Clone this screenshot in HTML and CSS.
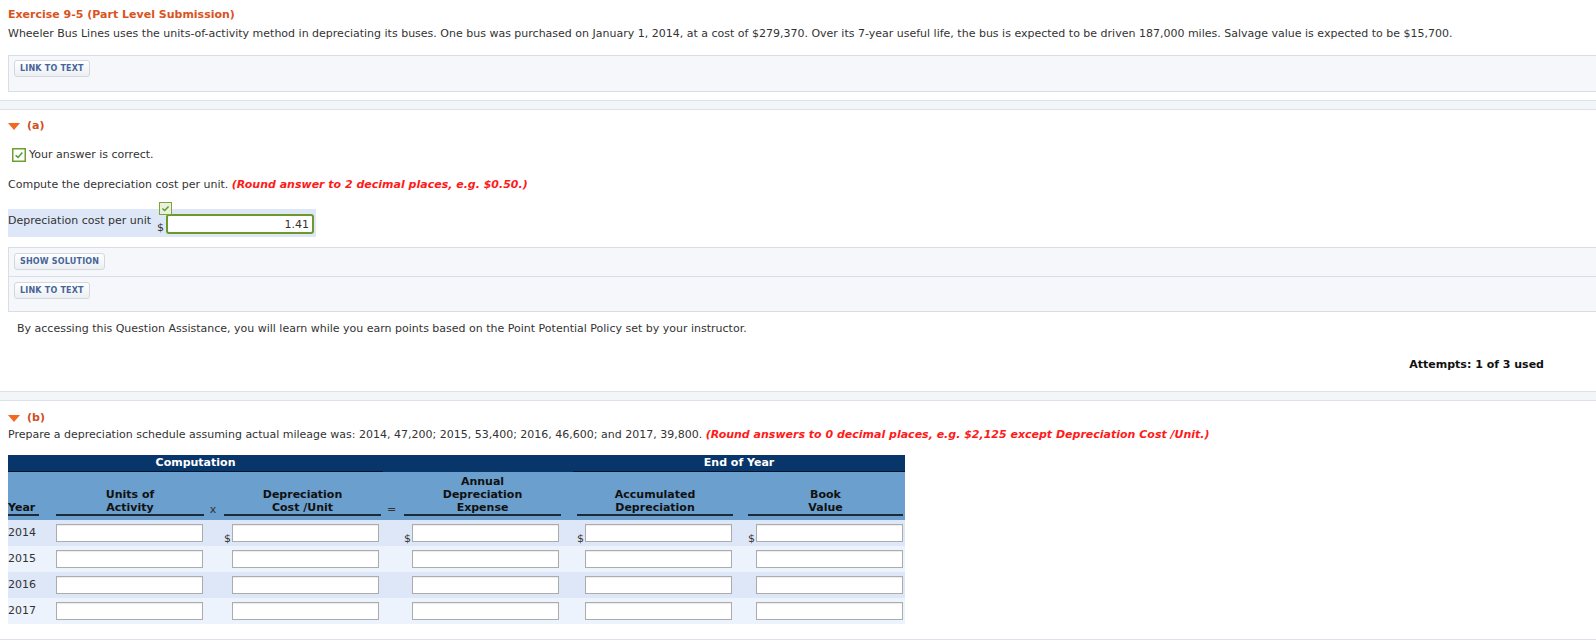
FILE: index.html
```html
<!DOCTYPE html>
<html lang="en">
<head>
    <meta charset="UTF-8">
    <meta name="viewport" content="width=device-width, initial-scale=1.0">
    <title>Exercise 9-5</title>
    <link rel="stylesheet" href="styles.css">
</head>
<body>
    <div class="question">
        <h1 class="ex-title">Exercise 9-5 (Part Level Submission)</h1>
        <p class="intro">Wheeler Bus Lines uses the units-of-activity method in depreciating its buses. One bus was purchased on January 1, 2014, at a cost of $279,370. Over its 7-year useful life, the bus is expected to be driven 187,000 miles. Salvage value is expected to be $15,700.</p>
        <div class="assist-panel first">
            <div class="assist-row"><button class="assist-btn">Link to Text</button></div>
        </div>
    </div>

    <div class="part-sep"></div>

    <div class="part">
        <div class="part-head"><span class="caret"></span>(a)</div>
        <div class="correct">
            <svg class="check-icon" width="14" height="14" viewBox="0 0 14 14">
                <rect x="0.75" y="0.75" width="12.5" height="12.5" fill="#fff" stroke="#6e9f31" stroke-width="1.5"/>
                <path d="M3.6 7.2 L6 9.4 L10.4 4.6" fill="none" stroke="#4f9a2a" stroke-width="1.5"/>
            </svg>
            Your answer is correct.
        </div>
        <p class="prompt">Compute the depreciation cost per unit. <em class="hint">(Round answer to 2 decimal places, e.g. $0.50.)</em></p>
        <div class="answer-row">
            <span class="answer-label">Depreciation cost per unit</span>
            <span class="answer-field">
                <svg class="mini-check" width="13" height="13" viewBox="0 0 13 13">
                    <rect x="0.5" y="0.5" width="12" height="12" fill="#e9f1dc" stroke="#7ba33e"/>
                    <path d="M3.4 6.6 L5.6 8.6 L9.6 4.4" fill="none" stroke="#5c9a2a" stroke-width="1.4"/>
                </svg>
                <span class="cur">$</span>
                <input class="answer-input" type="text" value="1.41">
            </span>
        </div>
        <div class="assist-panel">
            <div class="assist-row"><button class="assist-btn">Show Solution</button></div>
            <div class="assist-row last"><button class="assist-btn">Link to Text</button></div>
        </div>
        <p class="assist-note">By accessing this Question Assistance, you will learn while you earn points based on the Point Potential Policy set by your instructor.</p>
        <div class="attempts">Attempts: 1 of 3 used</div>
    </div>

    <div class="part-sep wide"></div>

    <div class="part">
        <div class="part-head b"><span class="caret"></span>(b)</div>
        <p class="prompt tight">Prepare a depreciation schedule assuming actual mileage was: 2014, 47,200; 2015, 53,400; 2016, 46,600; and 2017, 39,800. <em class="hint">(Round answers to 0 decimal places, e.g. $2,125 except Depreciation Cost /Unit.)</em></p>

        <table class="schedule">
            <colgroup>
                <col style="width: 44px">
                <col style="width: 154px">
                <col style="width: 14px">
                <col style="width: 163px">
                <col style="width: 17px">
                <col style="width: 163px">
                <col style="width: 10px">
                <col style="width: 162px">
                <col style="width: 9px">
                <col style="width: 161px">
            </colgroup>
            <tr class="group-row">
                <td colspan="4"><div class="group-label">Computation</div></td>
                <td colspan="3"></td>
                <td colspan="3"><div class="group-label">End of Year</div></td>
            </tr>
            <tr class="head-row">
                <th class="year-head"><div class="col-label">Year</div></th>
                <th><div class="col-label">Units of<br>Activity</div></th>
                <th class="op">x</th>
                <th><div class="col-label">Depreciation<br>Cost /Unit</div></th>
                <th class="op">=</th>
                <th><div class="col-label">Annual<br>Depreciation<br>Expense</div></th>
                <th></th>
                <th><div class="col-label">Accumulated<br>Depreciation</div></th>
                <th></th>
                <th><div class="col-label">Book<br>Value</div></th>
            </tr>
            <tr>
                <td class="year">2014</td>
                <td><div class="cell"><input type="text"></div></td>
                <td></td>
                <td><div class="cell"><span class="cur">$</span><input type="text"></div></td>
                <td></td>
                <td><div class="cell"><span class="cur">$</span><input type="text"></div></td>
                <td></td>
                <td><div class="cell"><span class="cur">$</span><input type="text"></div></td>
                <td></td>
                <td><div class="cell"><span class="cur">$</span><input type="text"></div></td>
            </tr>
            <tr>
                <td class="year">2015</td>
                <td><div class="cell"><input type="text"></div></td>
                <td></td>
                <td><div class="cell"><span class="cur"></span><input type="text"></div></td>
                <td></td>
                <td><div class="cell"><span class="cur"></span><input type="text"></div></td>
                <td></td>
                <td><div class="cell"><span class="cur"></span><input type="text"></div></td>
                <td></td>
                <td><div class="cell"><span class="cur"></span><input type="text"></div></td>
            </tr>
            <tr>
                <td class="year">2016</td>
                <td><div class="cell"><input type="text"></div></td>
                <td></td>
                <td><div class="cell"><span class="cur"></span><input type="text"></div></td>
                <td></td>
                <td><div class="cell"><span class="cur"></span><input type="text"></div></td>
                <td></td>
                <td><div class="cell"><span class="cur"></span><input type="text"></div></td>
                <td></td>
                <td><div class="cell"><span class="cur"></span><input type="text"></div></td>
            </tr>
            <tr>
                <td class="year">2017</td>
                <td><div class="cell"><input type="text"></div></td>
                <td></td>
                <td><div class="cell"><span class="cur"></span><input type="text"></div></td>
                <td></td>
                <td><div class="cell"><span class="cur"></span><input type="text"></div></td>
                <td></td>
                <td><div class="cell"><span class="cur"></span><input type="text"></div></td>
                <td></td>
                <td><div class="cell"><span class="cur"></span><input type="text"></div></td>
            </tr>
        </table>
    </div>

    <div class="part-sep bottom"></div>
</body>
</html>
```

FILE: styles.css
```css
html, body {
    overflow: hidden;
}
body {
    margin: 0;
    padding: 0 0 0 8px;
    font-family: "DejaVu Sans", Verdana, sans-serif;
    font-size: 11px;
    line-height: 16px;
    color: #333;
    background: #fff;
}
p {
    margin: 0;
}
.ex-title {
    margin: 7px 0 0;
    font-size: 11px;
    line-height: 16px;
    font-weight: bold;
    color: #d9531e;
}
.intro {
    margin-top: 3px;
}
.assist-panel {
    margin-top: 10px;
    background-color: #f5f7fa;
    border: 1px solid #d8dee7;
    border-right: none;
}
.assist-panel.first {
    margin-top: 13px;
}
.assist-panel.first .assist-row {
    padding: 4px 0 14px 5px;
}
.assist-row {
    padding: 5px 0 6px 5px;
}
.assist-row.last {
    border-top: 1px solid #d8dee7;
    padding-bottom: 12px;
}
.assist-btn {
    display: block;
    height: 17px;
    padding: 0 5px;
    font-family: inherit;
    font-size: 8px;
    font-weight: bold;
    letter-spacing: 0.2px;
    text-transform: uppercase;
    color: #47659a;
    background: linear-gradient(#ffffff, #eceff3);
    border: 1px solid #d3d8df;
    border-radius: 3px;
    cursor: pointer;
}
.part-sep {
    margin: 8px 0 0 -8px;
    height: 8px;
    background-color: #f3f6f9;
    border-top: 1px solid #dce2ea;
    border-bottom: 1px solid #dce2ea;
}
.part-sep.wide {
    margin-top: 18px;
}
.part-sep.bottom {
    margin-top: 15px;
}
.part-head {
    margin-top: 8px;
    font-weight: bold;
    color: #cf4f22;
    display: flex;
    align-items: center;
}
.part-head.b {
    margin-top: 9px;
}
.caret {
    width: 0;
    height: 0;
    border-left: 6px solid transparent;
    border-right: 6px solid transparent;
    border-top: 7px solid #f26a21;
    margin-right: 7px;
}
.correct {
    margin-top: 13px;
    display: flex;
    align-items: center;
    padding-left: 4px;
}
.check-icon {
    margin-right: 3px;
}
.prompt {
    margin-top: 14px;
}
.prompt.tight {
    margin-top: 1px;
}
.hint {
    color: #ff1a1a;
    font-weight: bold;
}
.answer-row {
    margin-top: 16px;
    width: 308px;
    height: 28px;
    display: flex;
    background-color: #dde7f7;
}
.answer-label {
    flex: none;
    width: 149px;
    padding-top: 4px;
}
.answer-field {
    position: relative;
    display: flex;
    align-items: flex-end;
    padding-top: 5px;
    height: 20px;
}
.answer-field .cur {
    width: 9px;
    line-height: 12px;
}
.mini-check {
    position: absolute;
    left: 2px;
    top: -7px;
}
.answer-input {
    width: 148px;
    height: 20px;
    box-sizing: border-box;
    border: 2px solid #6c9a2a;
    border-radius: 3px;
    padding: 0 3px;
    text-align: right;
    font-family: inherit;
    font-size: 11px;
    color: #333;
    background: #fff;
}
.assist-note {
    margin-top: 9px;
    padding-left: 9px;
}
.attempts {
    margin-top: 20px;
    padding-right: 52px;
    text-align: right;
    font-weight: bold;
    color: #111;
}
.schedule {
    margin-top: 12px;
    width: 897px;
    table-layout: fixed;
    border-collapse: collapse;
    border-spacing: 0;
}
.schedule td, .schedule th {
    padding: 0;
}
.schedule td {
    height: 26px;
}
.schedule tr:nth-child(odd) td {
    background-color: #dde7f7;
}
.schedule tr:nth-child(even) td {
    background-color: #edf3fc;
}
.schedule tr.group-row td {
    height: 17px;
    background-color: #08366a;
    color: #fff;
    font-weight: bold;
    text-align: center;
    vertical-align: top;
}
.group-label {
    border-bottom: 1px solid #02172e;
    line-height: 16px;
}
.head-row th {
    height: 44px;
    background-color: #6b9fcd;
    color: #111;
    font-weight: bold;
    vertical-align: bottom;
    line-height: 13px;
    padding-bottom: 4px;
}
.col-label {
    margin: 0 2px 0 4px;
    border-bottom: 2px solid #1b2b3c;
}
.year-head {
    text-align: left;
}
.year-head .col-label {
    margin: 0;
    width: 31px;
}
.head-row th.op {
    font-weight: normal;
    color: #333;
}
.year {
    padding-left: 1px;
}
.cell {
    display: flex;
    align-items: flex-end;
    padding-left: 4px;
}
.cell .cur {
    width: 8px;
    line-height: 12px;
    margin-bottom: -3px;
}
.cell input {
    width: 147px;
    height: 18px;
    box-sizing: border-box;
    border: 1px solid #acacac;
    box-shadow: inset 0 1px 1px rgba(0, 0, 0, 0.08);
    background: #fff;
    padding: 0 3px;
    font-family: inherit;
    font-size: 11px;
}
```
